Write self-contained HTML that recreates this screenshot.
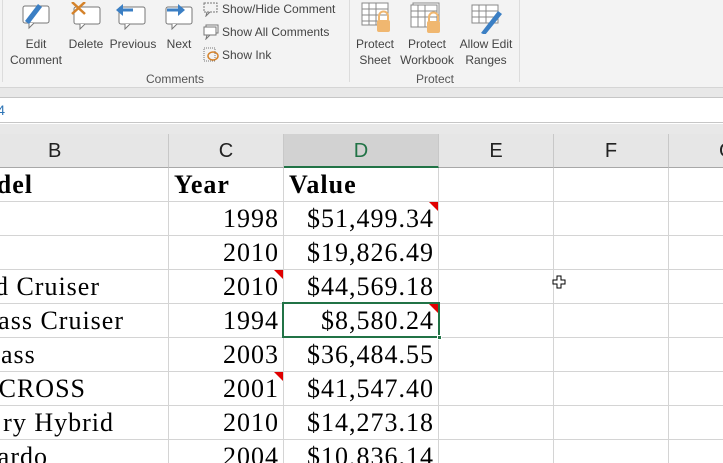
<!DOCTYPE html>
<html><head><meta charset="utf-8"><style>
*{margin:0;padding:0;box-sizing:border-box}
body{width:723px;height:463px;overflow:hidden;background:#fff;position:relative;font-family:"Liberation Sans",sans-serif}
.wrap{position:absolute;left:0;top:0;width:723px;height:463px;overflow:hidden}
.rib{position:absolute;left:0;top:0;width:723px;height:88px;background:#f3f3f3;border-bottom:1px solid #d5d5d5}
.t{position:absolute;font-size:12px;color:#444;text-align:center;line-height:16px;white-space:nowrap}
.s{position:absolute;font-size:12px;color:#444;white-space:nowrap}
.vs{position:absolute;width:1px;background:#dcdcdc}
.a{position:absolute}
.cell{position:absolute;font-family:"Liberation Serif",Georgia,serif;font-size:26px;letter-spacing:1px;color:#000;line-height:34px;white-space:nowrap}
.r{text-align:right}
.hl{position:absolute;left:0;width:723px;height:1px;background:#d4d4d4}
.vl{position:absolute;top:168px;width:1px;height:295px;background:#d4d4d4}
.hd{position:absolute;top:134px;height:34px;background:#e6e6e6;border-right:1px solid #c8c8c8;border-bottom:1px solid #a8a8a8;font-size:20px;text-align:center;line-height:34px;color:#222}
.tri{position:absolute;width:0;height:0;border-top:9px solid #e00000;border-left:9px solid transparent}
.lt{position:absolute;text-align:right;left:0;overflow:hidden;direction:rtl}
</style></head><body><div class="wrap">
<div class="rib">
<div class="vs" style="left:2px;top:0;height:82px"></div>
<svg class="a" style="left:20px;top:2px" width="32" height="28"><rect x="3" y="4" width="26" height="17" rx="2" fill="#fff" stroke="#777"/><path d="M9 21 L9 26 L14 21" fill="#fff" stroke="#777"/><path d="M5 19 L18 2 L22 5 L9 22 Z" fill="#3b7fc4"/></svg>
<svg class="a" style="left:70px;top:2px" width="32" height="28"><rect x="4" y="5" width="26" height="17" rx="2" fill="#fff" stroke="#777"/><path d="M10 22 L10 27 L15 22" fill="#fff" stroke="#777"/><path d="M2 0 L15 12 M15 0 L2 12" stroke="#d4822a" stroke-width="2.5"/></svg>
<svg class="a" style="left:116px;top:2px" width="34" height="28"><rect x="3" y="5" width="26" height="17" rx="2" fill="#fff" stroke="#777"/><path d="M9 22 L9 27 L14 22" fill="#fff" stroke="#777"/><path d="M2 8 L17 8" stroke="#3b7fc4" stroke-width="3"/><path d="M0 8 L7 2 L7 14 Z" fill="#3b7fc4"/></svg>
<svg class="a" style="left:163px;top:2px" width="34" height="28"><rect x="3" y="5" width="26" height="17" rx="2" fill="#fff" stroke="#777"/><path d="M9 22 L9 27 L14 22" fill="#fff" stroke="#777"/><path d="M4 8 L18 8" stroke="#3b7fc4" stroke-width="3"/><path d="M22 8 L15 2 L15 14 Z" fill="#3b7fc4"/></svg>
<div class="t" style="left:8px;top:36px;width:56px">Edit<br>Comment</div>
<div class="t" style="left:66px;top:36px;width:40px">Delete</div>
<div class="t" style="left:108px;top:36px;width:50px">Previous</div>
<div class="t" style="left:162px;top:36px;width:34px">Next</div>
<svg class="a" style="left:203px;top:1px" width="16" height="16"><rect x="1" y="2" width="13" height="9" fill="none" stroke="#777" stroke-dasharray="2 1"/><path d="M4 11 L3 15 L7 11" fill="none" stroke="#777"/></svg>
<div class="s" style="left:222px;top:2px">Show/Hide Comment</div>
<svg class="a" style="left:203px;top:24px" width="16" height="16"><rect x="3" y="1" width="12" height="8" fill="#fff" stroke="#777"/><rect x="1" y="3" width="12" height="8" fill="#fff" stroke="#777"/><path d="M4 11 L3 15 L7 11" fill="none" stroke="#777"/></svg>
<div class="s" style="left:222px;top:25px">Show All Comments</div>
<svg class="a" style="left:203px;top:47px" width="16" height="16"><rect x="1" y="1" width="11" height="13" fill="none" stroke="#777" stroke-dasharray="1 1"/><ellipse cx="10" cy="9" rx="5" ry="4" fill="none" stroke="#d4822a" stroke-width="1.5"/></svg>
<div class="s" style="left:222px;top:48px">Show Ink</div>
<div class="t" style="left:140px;top:71px;width:70px;color:#555">Comments</div>
<div class="vs" style="left:349px;top:0;height:82px"></div>
<svg class="a" style="left:361px;top:2px" width="32" height="32"><g fill="#fff" stroke="#888"><rect x="1" y="1" width="26" height="22"/><path d="M1 7 H27 M1 13 H27 M1 19 H27 M8 1 V23 M15 1 V23" fill="none"/></g><rect x="16" y="18" width="13" height="12" rx="2" fill="#f0b770"/><path d="M18 18 V14 a4.5 4.5 0 0 1 9 0 V18" fill="none" stroke="#f0b770" stroke-width="2"/></svg>
<svg class="a" style="left:410px;top:2px" width="34" height="32"><g fill="#fff" stroke="#888"><rect x="3" y="1" width="26" height="22"/><rect x="1" y="3" width="26" height="22"/><path d="M1 9 H27 M1 15 H27 M8 3 V25 M15 3 V25" fill="none"/></g><rect x="17" y="19" width="13" height="12" rx="2" fill="#f0b770"/><path d="M19 19 V15 a4.5 4.5 0 0 1 9 0 V19" fill="none" stroke="#f0b770" stroke-width="2"/></svg>
<svg class="a" style="left:471px;top:2px" width="34" height="32"><g fill="#fff" stroke="#888"><rect x="1" y="3" width="26" height="18"/><path d="M1 9 H27 M1 15 H27 M8 3 V21 M15 3 V21" fill="none"/></g><path d="M10 31 L27 9 L31 12 L14 33 Z" fill="#3b7fc4"/></svg>
<div class="t" style="left:352px;top:36px;width:46px">Protect<br>Sheet</div>
<div class="t" style="left:399px;top:36px;width:56px">Protect<br>Workbook</div>
<div class="t" style="left:456px;top:36px;width:60px">Allow Edit<br>Ranges</div>
<div class="t" style="left:400px;top:71px;width:70px;color:#555">Protect</div>
<div class="vs" style="left:519px;top:0;height:82px"></div>
</div>
<div class="a" style="left:0;top:88px;width:723px;height:10px;background:#e8e8e8;border-bottom:1px solid #c6c6c6"></div>
<div class="a" style="left:0;top:99px;width:723px;height:24px;background:#fff;border-bottom:1px solid #c6c6c6"></div>
<div class="a" style="left:0;top:102px;font-size:14px;color:#2e75b6;width:5px;overflow:hidden;direction:rtl">4</div>
<div class="a" style="left:0;top:124px;width:723px;height:10px;background:#e8e8e8"></div>
<div class="hd" style="left:0;width:169px;text-align:left;text-indent:48px">B</div>
<div class="hd" style="left:169px;width:115px">C</div>
<div class="hd" style="left:284px;width:155px;background:#d2d2d2;color:#217346;border-bottom:2px solid #217346">D</div>
<div class="hd" style="left:439px;width:115px">E</div>
<div class="hd" style="left:554px;width:115px">F</div>
<div class="hd" style="left:669px;width:54px;text-align:left;text-indent:50px;overflow:hidden;border-right:none">G</div>
<div class="vl" style="left:168px"></div><div class="vl" style="left:283px"></div><div class="vl" style="left:438px"></div><div class="vl" style="left:553px"></div><div class="vl" style="left:668px"></div>
<div class="hl" style="top:201px"></div><div class="hl" style="top:235px"></div><div class="hl" style="top:269px"></div><div class="hl" style="top:303px"></div><div class="hl" style="top:337px"></div><div class="hl" style="top:371px"></div><div class="hl" style="top:405px"></div><div class="hl" style="top:439px"></div>
<div class="cell lt" style="width:33px;top:168px;font-weight:bold">del</div>
<div class="cell" style="left:174px;top:168px;font-weight:bold">Year</div>
<div class="cell" style="left:289px;top:168px;font-weight:bold">Value</div>
<div class="cell lt" style="width:100px;top:270px">d Cruiser</div>
<div class="cell lt" style="width:124px;top:304px">ass Cruiser</div>
<div class="cell" style="left:1px;top:338px">ass</div>
<div class="cell lt" style="width:86px;top:372px">CROSS</div>
<div class="cell lt" style="width:114px;top:406px">ry Hybrid</div>
<div class="cell lt" style="width:48px;top:440px">ardo</div>
<div class="cell r" style="left:168px;width:111px;top:202px">1998</div>
<div class="cell r" style="left:168px;width:111px;top:236px">2010</div>
<div class="cell r" style="left:168px;width:111px;top:270px">2010</div>
<div class="cell r" style="left:168px;width:111px;top:304px">1994</div>
<div class="cell r" style="left:168px;width:111px;top:338px">2003</div>
<div class="cell r" style="left:168px;width:111px;top:372px">2001</div>
<div class="cell r" style="left:168px;width:111px;top:406px">2010</div>
<div class="cell r" style="left:168px;width:111px;top:440px">2004</div>
<div class="cell r" style="left:273px;width:161px;top:202px">$51,499.34</div>
<div class="cell r" style="left:273px;width:161px;top:236px">$19,826.49</div>
<div class="cell r" style="left:273px;width:161px;top:270px">$44,569.18</div>
<div class="cell r" style="left:273px;width:161px;top:304px">$8,580.24</div>
<div class="cell r" style="left:273px;width:161px;top:338px">$36,484.55</div>
<div class="cell r" style="left:273px;width:161px;top:372px">$41,547.40</div>
<div class="cell r" style="left:273px;width:161px;top:406px">$14,273.18</div>
<div class="cell r" style="left:273px;width:161px;top:440px">$10,836.14</div>
<div class="tri" style="left:429px;top:202px"></div>
<div class="tri" style="left:274px;top:270px"></div>
<div class="tri" style="left:429px;top:304px"></div>
<div class="tri" style="left:274px;top:372px"></div>
<div class="a" style="left:282px;top:302px;width:158px;height:36px;border:2px solid #217346"></div>
<div class="a" style="left:437px;top:335px;width:5px;height:5px;background:#217346;border:1px solid #fff"></div>
<svg class="a" style="left:552px;top:275px" width="14" height="14"><path d="M5 1 H9 V5 H13 V9 H9 V13 H5 V9 H1 V5 H5 Z" fill="#fff" stroke="#000"/></svg>
</div></body></html>
